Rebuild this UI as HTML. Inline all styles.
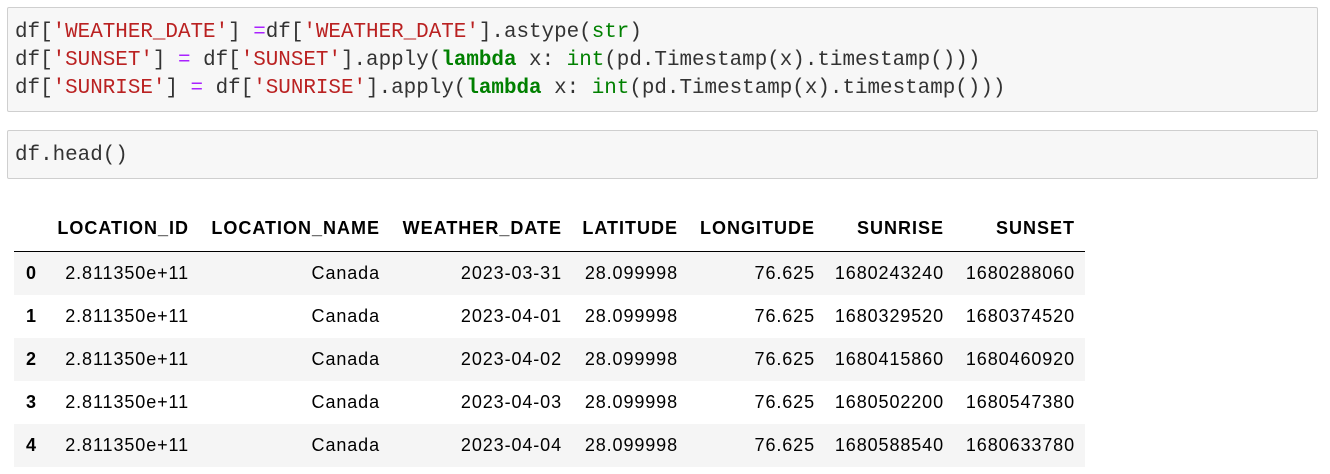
<!DOCTYPE html>
<html><head><meta charset="utf-8"><style>
body{margin:0;background:#fff;width:1330px;height:474px;overflow:hidden;position:relative}
.cell{position:absolute;left:7px;width:1311px;background:#f7f7f7;border:1px solid #cfcfcf;border-radius:2px;box-sizing:border-box}
pre{margin:0;font-family:"Liberation Mono",monospace;font-size:20.9px;line-height:28px;color:#333;padding:0 0 0 7px}
.s{color:#ba2121}.o{color:#aa22ff}.k{color:#008000;font-weight:bold}.b{color:#008000}
table{position:absolute;left:14px;top:206px;border-collapse:collapse;font-family:"Liberation Sans",Arial,sans-serif;font-size:18px;color:#000;table-layout:fixed;letter-spacing:0.9px}
th,td{text-align:right;padding:0 10px 0 0;height:43px;white-space:nowrap}
thead th{height:45px;border-bottom:1px solid #000;vertical-align:middle;letter-spacing:1px}
tbody th{text-align:left;padding-left:12px}
tbody tr:nth-child(odd){background:#f5f5f5}
</style></head><body>
<div class="cell" style="top:7px;height:105px;padding-top:11px"><pre>df[<span class="s">'WEATHER_DATE'</span>] <span class="o">=</span>df[<span class="s">'WEATHER_DATE'</span>].astype(<span class="b">str</span>)
df[<span class="s">'SUNSET'</span>] <span class="o">=</span> df[<span class="s">'SUNSET'</span>].apply(<span class="k">lambda</span> x: <span class="b">int</span>(pd.Timestamp(x).timestamp()))
df[<span class="s">'SUNRISE'</span>] <span class="o">=</span> df[<span class="s">'SUNRISE'</span>].apply(<span class="k">lambda</span> x: <span class="b">int</span>(pd.Timestamp(x).timestamp()))</pre></div>
<div class="cell" style="top:130px;height:49px;padding-top:11px"><pre>df.head()</pre></div>
<table>
<colgroup><col style="width:34px"><col style="width:151px"><col style="width:191px"><col style="width:182px"><col style="width:116px"><col style="width:137px"><col style="width:129px"><col style="width:131px"></colgroup>
<thead><tr><th></th><th>LOCATION_ID</th><th>LOCATION_NAME</th><th>WEATHER_DATE</th><th>LATITUDE</th><th>LONGITUDE</th><th>SUNRISE</th><th>SUNSET</th></tr></thead>
<tbody>
<tr><th>0</th><td>2.811350e+11</td><td>Canada</td><td>2023-03-31</td><td>28.099998</td><td>76.625</td><td>1680243240</td><td>1680288060</td></tr>
<tr><th>1</th><td>2.811350e+11</td><td>Canada</td><td>2023-04-01</td><td>28.099998</td><td>76.625</td><td>1680329520</td><td>1680374520</td></tr>
<tr><th>2</th><td>2.811350e+11</td><td>Canada</td><td>2023-04-02</td><td>28.099998</td><td>76.625</td><td>1680415860</td><td>1680460920</td></tr>
<tr><th>3</th><td>2.811350e+11</td><td>Canada</td><td>2023-04-03</td><td>28.099998</td><td>76.625</td><td>1680502200</td><td>1680547380</td></tr>
<tr><th>4</th><td>2.811350e+11</td><td>Canada</td><td>2023-04-04</td><td>28.099998</td><td>76.625</td><td>1680588540</td><td>1680633780</td></tr>
</tbody></table>
</body></html>
